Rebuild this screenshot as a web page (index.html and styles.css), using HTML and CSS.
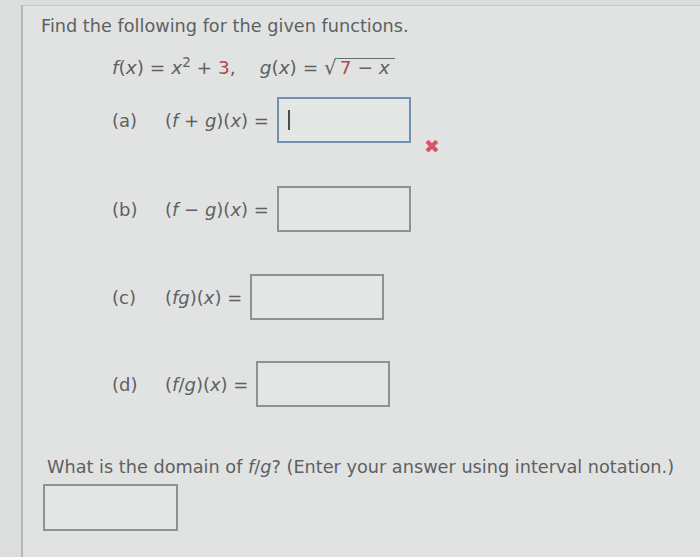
FILE: index.html
```html
<!DOCTYPE html>
<html>
<head>
<meta charset="utf-8">
<link rel="stylesheet" href="styles.css">
</head>
<body>
<div class="page">
  <div class="card">
    <p class="title">Find the following for the given functions.</p>
    <div class="given"><span class="i">f</span>(<span class="i">x</span>) = <span class="i">x</span><sup>2</sup> + <span class="rnd">3</span>,<span class="sp"></span><span class="i">g</span>(<span class="i">x</span>) = <span class="root"><span class="rad">√</span><span class="under"><span class="rnd">7</span> − <span class="i">x</span></span></span></div>
    <div class="row row-a">
      <span class="lbl">(a)</span>
      <span class="expr">(<span class="i">f</span> + <span class="i">g</span>)(<span class="i">x</span>) =</span>
      <span class="box active"><span class="caret"></span></span>
      <span class="wrong">✖</span>
    </div>
    <div class="row row-b">
      <span class="lbl">(b)</span>
      <span class="expr">(<span class="i">f</span> − <span class="i">g</span>)(<span class="i">x</span>) =</span>
      <span class="box"></span>
    </div>
    <div class="row row-c">
      <span class="lbl">(c)</span>
      <span class="expr">(<span class="i">fg</span>)(<span class="i">x</span>) =</span>
      <span class="box"></span>
    </div>
    <div class="row row-d">
      <span class="lbl">(d)</span>
      <span class="expr">(<span class="i">f</span>/<span class="i">g</span>)(<span class="i">x</span>) =</span>
      <span class="box"></span>
    </div>
    <p class="question">What is the domain of <span class="i">f</span>/<span class="i">g</span>? (Enter your answer using interval notation.)</p>
    <span class="box domain"></span>
  </div>
</div>
</body>
</html>
```
FILE: styles.css
```css
html, body {
  margin: 0;
  padding: 0;
}
body {
  background: #dcdedd;
  font-family: "DejaVu Sans", Verdana, sans-serif;
  color: #5e6061;
  width: 700px;
  height: 557px;
  overflow: hidden;
}
.page {
  padding: 5px 0 0 21px;
}
.card {
  border-left: 2px solid #b4b7b6;
  border-top: 1px solid #c4c7c6;
  background: #e1e3e2;
  padding: 10px 0 40px 18px;
}
.title {
  margin: 0;
  font-size: 17.7px;
  line-height: 20px;
}
.i {
  font-style: italic;
}
.rnd {
  color: #b24a4a;
}
.given {
  margin: 20px 0 0 71px;
  font-size: 18.5px;
  line-height: 24px;
  height: 24px;
  white-space: pre;
}
.given sup {
  font-size: 13.5px;
  line-height: 0;
  vertical-align: 7px;
}
.sp {
  display: inline-block;
  width: 24px;
}
.root {
  display: inline-block;
  line-height: 20px;
}
.rad {
  font-size: 20px;
}
.under {
  border-top: 1px solid #6a6c6d;
  padding: 0 5px 0 3px;
  display: inline-block;
  line-height: 18px;
}
.row {
  display: flex;
  align-items: center;
  margin-left: 71px;
  font-size: 18px;
  height: 46px;
}
.row-a { margin-top: 17px; }
.row-b { margin-top: 43px; }
.row-c { margin-top: 42px; }
.row-d { margin-top: 41px; }
.lbl {
  width: 53px;
}
.expr {
  white-space: pre;
}
.box {
  display: block;
  box-sizing: border-box;
  width: 134px;
  height: 46px;
  border: 2px solid #8f9292;
  background: #e3e6e5;
  margin-left: 8px;
}
.box.active {
  border-color: #6f8fb3;
  position: relative;
}
.caret {
  position: absolute;
  left: 9px;
  top: 11px;
  width: 2px;
  height: 20px;
  background: #4a4c4d;
}
.wrong {
  color: #d9536b;
  font-size: 19px;
  align-self: flex-end;
  margin: 0 0 -14px 13px;
}
.question {
  margin: 50px 0 0 6px;
  font-size: 17.7px;
  line-height: 20px;
}
.box.domain {
  margin: 7px 0 0 2px;
  width: 135px;
  height: 47px;
}
```
